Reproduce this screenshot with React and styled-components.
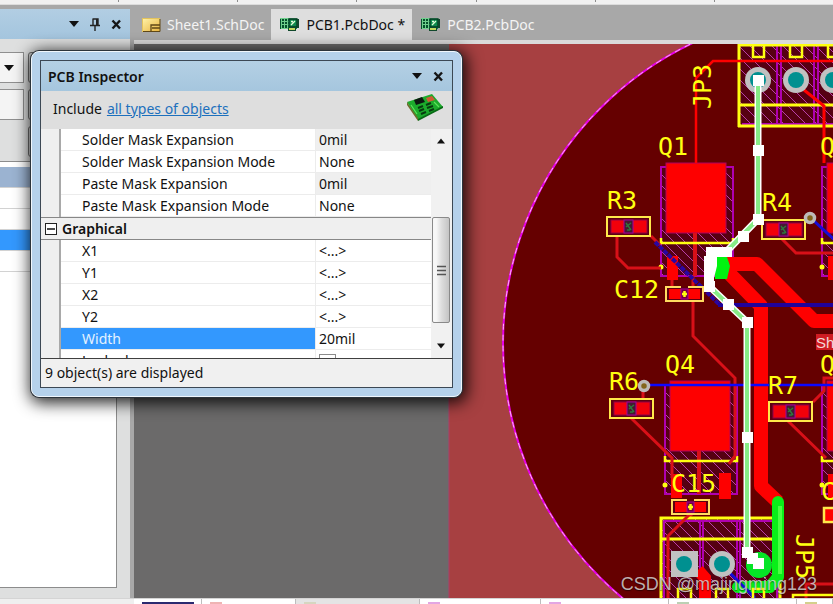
import React from 'react';
import styled, { createGlobalStyle, css } from 'styled-components';

const GlobalStyle = createGlobalStyle`
  * {
    box-sizing: border-box;
  }

  body {
    margin: 0;
    overflow: hidden;
    font-family: "Noto Sans", "Open Sans", sans-serif;
    font-size: 14px;
    color: #111;
  }

  button, input {
    font: inherit;
    color: inherit;
  }
`;

const AppShell = styled.div`
  display: flex;
  flex-direction: column;
  height: 100vh;
  background: #a8a8a8;
`;

const ToolbarEdge = styled.div`
  display: flex;
  justify-content: space-evenly;
  flex: none;
  height: 5px;
  background: #f1f1f1;
  border-bottom: 1px solid #dcdcdc;
`;

const ToolbarTick = styled.span`
  width: 1px;
  height: 2px;
  background: #8c8c8c;
`;

const Body = styled.div`
  display: flex;
  flex: 1;
  min-height: 0;
  gap: 4px;
`;

const SidePanel = styled.aside`
  display: flex;
  flex-direction: column;
  flex: none;
  width: 130px;
  margin-top: 4px;
  background: #dedfdf;
`;

const SideHeader = styled.div`
  display: flex;
  align-items: center;
  justify-content: flex-end;
  gap: 9px;
  height: 30px;
  padding-right: 8px;
  background: linear-gradient(#b2cee3, #a4c5de);
`;

const IconButton = styled.button`
  display: flex;
  align-items: center;
  justify-content: center;
  width: 12px;
  height: 16px;
  padding: 0;
  border: 0;
  background: none;
`;

const SideControls = styled.div`
  display: grid;
  grid-template-columns: 24px 60px;
  grid-auto-rows: 31px;
  gap: 6px 4px;
  padding-top: 13px;
  height: 122px;
  overflow: hidden;
`;

const fieldBox = css`
  border: 1px solid #8f8f8f;
  border-left: 0;
  border-radius: 0;
  background: #f4f4f4;
  padding: 0;
  width: 24px;
`;

const DropButton = styled.button`
  ${fieldBox}
  display: flex;
  align-items: center;
  padding-left: 4px;
`;

const SideInput = styled.input`
  ${fieldBox}
`;

const SideAction = styled.button`
  border: 1px solid #6e6e6e;
  border-radius: 3px;
  background: #d4d4d4;
`;

const SideList = styled.div`
  flex: 1;
  margin: 0 13px 10px 0;
  padding-top: 5px;
  border: solid #8c8c8c;
  border-width: 1px 1px 1px 0;
  background: #fff;
`;

const tones = { header: '#9bb3d1', plain: '#fff', active: '#3398fe' };

const SideRow = styled.div`
  height: 21px;
  border-bottom: 1px solid #d2d2d2;
  background: ${({ $tone }) => tones[$tone]};
`;

const Documents = styled.main`
  display: flex;
  flex-direction: column;
  flex: 1;
  min-width: 0;
`;

const TabBar = styled.div`
  display: flex;
  flex: none;
  height: 39px;
  padding-top: 4px;
  border-bottom: 4px solid #dadada;
`;

const Tab = styled.button`
  display: flex;
  align-items: center;
  gap: 6px;
  height: 31px;
  padding: 0 7px 0 8px;
  border: 0;
  white-space: nowrap;
  background: ${({ $active }) => ($active ? '#dedede' : 'transparent')};
  color: ${({ $active }) => ($active ? '#111' : '#f4f4f4')};
`;

const Canvas = styled.div`
  position: relative;
  display: flex;
  flex: 1;
  min-height: 0;
  overflow: hidden;
  background: #6b6a6a;
`;

const BoardSvg = styled.svg`
  display: block;
  width: 100%;
  height: 100%;
`;

const Silk = styled.text`
  font-family: "DejaVu Sans Mono", monospace;
  font-size: 25px;
  fill: #ffff10;
`;

const NetTip = styled.text`
  font-family: "Liberation Sans", Arial, sans-serif;
  font-size: 15px;
  fill: #f3d6d6;
`;

const Watermark = styled.span`
  position: absolute;
  right: 16px;
  bottom: 2px;
  font-family: "Liberation Sans", Arial, sans-serif;
  font-size: 18px;
  line-height: 24px;
  color: rgba(222, 222, 222, 0.8);
  text-shadow: 0 1px 1px rgba(0, 0, 0, 0.5);
`;

const LayerBar = styled.div`
  display: grid;
  grid-template-columns: 68px 94px 124px 121px 128px 128px 1fr;
  flex: none;
  height: 6px;
  padding-left: 134px;
  background: #efefef;
  border-top: 1px solid #d4d4d4;
`;

const LayerTab = styled.div`
  padding: 3px 4px 0 8px;
  border-right: 1px solid #bdbdbd;
  background: ${({ $shade }) => $shade || '#fff'};

  &::before {
    content: "";
    display: block;
    width: ${({ $wide }) => ($wide ? '52px' : '12px')};
    height: 3px;
    background: ${({ $color }) => $color};
  }
`;

const Inspector = styled.section`
  position: absolute;
  left: 31px;
  top: 51px;
  width: 431px;
  padding: 8px;
  border: 1px solid #f0f6fc;
  border-radius: 8px;
  background: #b5d1eb;
  box-shadow: 0 0 0 1px #2c333b, 2px 3px 16px 3px rgba(0, 0, 0, 0.85);
`;

const InspectorFrame = styled.div`
  border: 1px solid #3c4854;
  background: #f0f0f0;
`;

const TitleBar = styled.header`
  display: flex;
  align-items: center;
  gap: 9px;
  height: 30px;
  padding: 0 8px 0 7px;
  background: linear-gradient(#b4d0e4, #a5c6de);
`;

const Title = styled.h1`
  flex: 1;
  margin: 0;
  font-size: 14px;
  font-weight: 600;
`;

const FilterBar = styled.div`
  display: flex;
  align-items: center;
  gap: 5px;
  height: 38px;
  padding: 0 8px 4px 12px;
  background: #dedede;
`;

const FilterLink = styled.a`
  flex: 1;
  color: #1c70bd;
`;

const Grid = styled.div`
  display: flex;
  align-items: flex-start;
  height: 230px;
  overflow: hidden;
  border-bottom: 1px solid #3f3f3f;
`;

const PropertyTable = styled.table`
  flex: 1;
  table-layout: fixed;
  border-collapse: separate;
  border-spacing: 0;
  line-height: 20px;
`;

const GutterCol = styled.col`
  width: 20px;
`;

const NameCol = styled.col`
  width: 255px;
`;

const Gutter = styled.td`
  padding: 0;
  border-right: 2px solid #a9a9a9;
  background: #efefef;
`;

const NameCell = styled.th`
  height: 22px;
  padding: 0 0 0 21px;
  border: solid #ececec;
  border-width: 0 1px 1px 0;
  background: ${({ $selected }) => ($selected ? '#3398fe' : '#fff')};
  color: ${({ $selected }) => ($selected ? '#e4f2ff' : '#111')};
  font-weight: 400;
  text-align: left;
`;

const ValueCell = styled.td`
  padding: 0 0 0 3px;
  border-bottom: 1px solid #ececec;
  background: ${({ $readOnly }) => ($readOnly ? '#efefef' : '#fff')};
`;

const GroupCell = styled.th`
  height: 23px;
  padding: 0 0 0 4px;
  border: solid #878787;
  border-width: 1px 0;
  background: #efefef;
  font-weight: 600;
  text-align: left;
`;

const GroupLabel = styled.span`
  display: flex;
  align-items: center;
  gap: 5px;
`;

const Toggle = styled.button`
  display: flex;
  align-items: center;
  justify-content: center;
  width: 12px;
  height: 12px;
  padding: 0;
  border: 1px solid #222;
  background: #fff;
`;

const LockBox = styled.input`
  appearance: none;
  display: block;
  width: 17px;
  height: 17px;
  margin: 3px 0 0;
  border: 1px solid #8b8b8b;
  background: #fff;
`;

const ScrollBar = styled.div`
  display: flex;
  flex-direction: column;
  align-self: stretch;
  flex: none;
  width: 21px;
  padding: 0 2px 0 1px;
  background: #f1f1f1;
`;

const ScrollArrow = styled.button`
  display: flex;
  align-items: center;
  justify-content: center;
  height: 24px;
  padding: 0;
  border: 0;
  background: none;
`;

const ScrollTrack = styled.div`
  flex: 1;
  display: flex;
  flex-direction: column;
  justify-content: flex-end;
  padding-bottom: 11px;
`;

const ScrollThumb = styled.div`
  display: flex;
  align-items: center;
  justify-content: center;
  height: 106px;
  border: 1px solid #898989;
  border-radius: 2px;
  background: linear-gradient(90deg, #f7f7f7 20%, #dcdcdc 55%, #c4c4c4);
`;

const StatusLine = styled.footer`
  height: 28px;
  padding: 0 4px;
  line-height: 28px;
`;

const Arrow = ({ up, size = 10 }) => (
  <svg width={size} height={size} viewBox="0 0 10 10" aria-hidden="true">
    <path d={up ? 'M0 8L5 2L10 8Z' : 'M0 2H10L5 8Z'} fill="#111" />
  </svg>
);

const Cross = () => (
  <svg width="11" height="11" viewBox="0 0 11 11" aria-hidden="true">
    <path d="M1.5 1.5L9 9.5M9 1.5L1.5 9.5" stroke="#161616" strokeWidth="2.4" />
  </svg>
);

const Pin = () => (
  <svg width="10" height="13" viewBox="0 0 10 13" aria-hidden="true">
    <path d="M2.5 1H8V7.5M3 1V7.5M0 7.5H10M5 8V13" fill="none" stroke="#222" strokeWidth="1.4" />
    <path d="M6 1H8V7.5H6Z" fill="#222" />
  </svg>
);

const SchIcon = () => (
  <svg width="19" height="14" viewBox="0 0 19 14" aria-hidden="true">
    <defs>
      <linearGradient id="sheet" x1="0" y1="0" x2="1" y2="1">
        <stop offset="0" stopColor="#fff3a8" />
        <stop offset="1" stopColor="#e8b440" />
      </linearGradient>
    </defs>
    <rect x="0.5" y="0.5" width="17" height="13" fill="url(#sheet)" stroke="#e3c35c" />
    <path d="M1 13.5H18V1" fill="none" stroke="#5f4716" />
    <path d="M9 13V7H18M10 10H18" fill="none" stroke="#5f4716" strokeWidth="1.3" />
  </svg>
);

const PcbIcon = () => (
  <svg width="21" height="15" viewBox="0 0 21 15" aria-hidden="true">
    <rect x="1" y="1" width="10" height="11" fill="#07502c" />
    <rect x="9" y="1" width="9" height="11" fill="#0e8a4c" />
    <path d="M1 1.5H18M2 4.5H10M2 7.5H10M2 11.5H10M2.5 1V12M5.5 1V12M8.5 1V12" stroke="#6fcf8c" strokeWidth="1" />
    <path d="M10 2H18V10H10Z" fill="none" stroke="#063a24" strokeWidth="1.3" />
    <path d="M12 8L16 4M12 4.5H14" stroke="#e2ffd9" strokeWidth="1.3" />
    <path d="M9 11H17V14H9ZM18 2H20V11H18Z" fill="#10482c" />
    <path d="M10 11H16V13H10Z" fill="#c4d85c" />
  </svg>
);

const BoardIcon = () => (
  <svg width="38" height="30" viewBox="0 0 38 30" aria-hidden="true">
    <path d="M1 9L26 1L37 14L12 27Z" fill="#1cab2c" />
    <path d="M1 9L12 25V28L1 12Z" fill="#6d6d2d" />
    <path d="M12 26L37 13V15L12 28Z" fill="#086b16" />
    <path d="M8 7L16 4L19 9L10 12Z" fill="#0c1810" />
    <path d="M20 5L26 3L29 7L22 9Z" fill="#cf5b35" />
    <path d="M12 15L17 13M13 18L18 16M15 21L20 19M20 12L25 10M21 15L27 13M23 18L28 16" stroke="#073c10" strokeWidth="2" />
    <path d="M28 9L33 14M5 12L11 21" stroke="#5de35a" strokeWidth="1.2" />
  </svg>
);

/* board items, all in design coordinates */
const RED = '#fe0000';
const TRACE = '#d81018';
const YELLOW = '#ffff10';
const MAGENTA = '#b000b0';

const SILK_LABELS = [
  { text: 'Q1', x: 658, y: 155 },
  { text: 'Q', x: 820, y: 155 },
  { text: 'R3', x: 607, y: 209 },
  { text: 'R4', x: 762, y: 211 },
  { text: 'C12', x: 614, y: 298 },
  { text: 'Q4', x: 665, y: 373 },
  { text: 'Q', x: 820, y: 373 },
  { text: 'R6', x: 609, y: 390 },
  { text: 'R7', x: 768, y: 394 },
  { text: 'C15', x: 671, y: 492 },
  { text: 'C', x: 821, y: 500 },
];

const RESISTORS = [
  { x: 607, y: 217 },
  { x: 762, y: 220 },
  { x: 610, y: 399 },
  { x: 769, y: 402 },
];

const HANDLES = [
  [758, 80],
  [758, 150],
  [758, 219],
  [743, 236],
  [709, 286],
  [728, 304],
  [747, 322],
  [747, 437],
  [747, 552],
];

const Resistor = ({ x, y }) => (
  <g transform={`translate(${x} ${y})`}>
    <rect width="43" height="19" fill="#5c0010" stroke="#ffe94a" strokeWidth="2" />
    <rect x="4" y="3" width="36" height="13" fill="#f2000a" stroke="#930048" />
    <rect x="17" y="3" width="9" height="13" fill="#461830" stroke="#a000a0" />
    <path d="M19 6L24 13M24 6L19 10M20 13H23" stroke="#2d7a3c" strokeWidth="1.4" />
  </g>
);

const Capacitor = ({ x, y }) => (
  <g transform={`translate(${x} ${y})`}>
    <path d="M15 0H0V14H37V0H22" fill="#5c0010" stroke="#ffdc60" strokeWidth="2" />
    <rect x="3" y="2" width="12" height="10" fill={RED} />
    <rect x="22" y="2" width="12" height="10" fill={RED} />
    <rect x="15" y="2" width="7" height="10" fill="#77003c" stroke="#a000a0" />
    <path d="M16 7H21M18.5 4V10" stroke={YELLOW} strokeWidth="2.5" />
  </g>
);

const Transistor = ({ x, y }) => (
  <g transform={`translate(${x} ${y})`}>
    <rect x="0" y="4" width="72" height="109" fill="url(#hatch)" stroke={MAGENTA} strokeWidth="2" />
    <rect x="5" y="0" width="60" height="70" fill={RED} stroke="#b00060" />
    <path d="M34 70V113" stroke={TRACE} strokeWidth="4" />
    <rect x="6" y="93" width="11" height="24" fill={RED} />
    <path d="M0 75V80H72V75" fill="none" stroke={YELLOW} strokeWidth="2.5" />
    <circle cx="0" cy="104" r="2.5" fill={YELLOW} />
  </g>
);

const Pad = ({ x, y }) => (
  <g>
    <circle cx={x} cy={y} r="13" fill="#c1c1c1" />
    <circle cx={x} cy={y} r="8" fill="#009090" />
  </g>
);

const Via = ({ x, y }) => (
  <circle cx={x} cy={y} r="4.5" fill="#83661c" stroke="#bdbab8" strokeWidth="3.5" />
);

const Board = () => (
  <BoardSvg viewBox="134 44 699 554" preserveAspectRatio="xMinYMin slice" role="img" aria-label="PCB layout">
    <defs>
      <pattern id="hatch" width="11" height="11" patternUnits="userSpaceOnUse">
        <rect width="11" height="11" fill="#560012" />
        <path d="M-1 -1L12 12" stroke="#b840a8" strokeWidth="1" />
      </pattern>
    </defs>
    <rect x="449" y="44" width="1200" height="1200" fill="#a74041" />
    <path d="M449 390V1200" stroke="#b03a68" strokeWidth="1" />
    <circle cx="835" cy="343" r="332" fill="#650000" stroke="#e800e8" strokeWidth="2" />
    <circle cx="835" cy="343" r="332" fill="none" stroke="#ffb8f4" strokeWidth="1" strokeDasharray="6 5" />

    {/* top connector */}
    <rect x="740" y="45" width="120" height="81" fill="url(#hatch)" />
    <path d="M742 124H833M777 45V124M781 45V124M814 45V124M818 45V124" stroke={MAGENTA} strokeWidth="2" />
    <path d="M739 127V45H840M738 105H840M738 126H840" fill="none" stroke={YELLOW} strokeWidth="3" />
    <path d="M753 44V57H764V44M790 44V57H802V44M828 44V57H840" fill="none" stroke={YELLOW} strokeWidth="2.5" />

    <Transistor x={661} y={163} />
    <Transistor x={665} y={381} />
    <Transistor x={822} y={163} />
    <Transistor x={822} y={381} />
    <rect x="719" y="473" width="12" height="26" fill={RED} />

    {/* thin traces */}
    <g fill="none" stroke={TRACE} strokeWidth="3">
      <path d="M840 61H713L696 78V163" stroke={RED} strokeWidth="2.5" />
      <path d="M804 90L824 106V163" stroke={RED} />
      <path d="M617 232V257L628 268H661M651 236L660 245" />
      <path d="M693 276V336L735 378V456L729 464" />
      <path d="M672 280V288M782 239L796 253H833" />
      <path d="M643 391V398M630 417L672 458V478M788 421L826 458M813 402L824 391V378H840" />
      <path d="M692 514L667 539V598" />
      <path d="M806 598V584H840" />
    </g>

    {/* bottom connector */}
    <rect x="661" y="519" width="119" height="90" fill="url(#hatch)" />
    <path d="M664 521H778M664 521V604M700 521V604M703 521V604M737 521V604M740 521V604M777 521V604" fill="none" stroke={MAGENTA} strokeWidth="2" />
    <path d="M661 604V518H780V604M661 539H780" fill="none" stroke={YELLOW} strokeWidth="3" />
    <path d="M692 512L668 536V604M692 566L705 580V604" fill="none" stroke={TRACE} strokeWidth="3" />
    <path d="M698 570L705 578V604" fill="none" stroke={RED} strokeWidth="12" />

    {/* wide copper */}
    <g fill="none" strokeLinejoin="round">
      <path d="M722 264H757L814 321H845" stroke={RED} strokeWidth="14" />
      <path d="M724 268L761 306V486L778 502" stroke={RED} strokeWidth="14" />
      <path d="M778 502V577L770 587H738" stroke="#09ef18" strokeWidth="12" strokeLinecap="round" />
      <path d="M780 506V574" stroke="#48ff40" strokeWidth="4" />
    </g>

    {/* unrouted nets */}
    <path d="M655 242L720 305" stroke="#2a06a0" strokeWidth="4" strokeDasharray="5 1" />
    <path d="M718 305H840" stroke="#20029a" strokeWidth="4" />
    <path d="M648 385H840" stroke="#0c08ff" strokeWidth="2.5" />
    <path d="M814 221L840 245M730 573L755 598" stroke="#160cd8" strokeWidth="3" />

    {RESISTORS.map((part) => (
      <Resistor key={`${part.x}-${part.y}`} {...part} />
    ))}
    <Capacitor x={666} y={287} />
    <Capacitor x={672} y={500} />
    <rect x="824" y="508" width="20" height="14" fill={RED} stroke="#ffe94a" strokeWidth="2.5" />
    <Via x={810} y={218} />
    <Via x={644} y={386} />

    <Pad x={758} y={80} />
    <Pad x={796} y={80} />
    <Pad x={833} y={80} />
    <rect x="671" y="551" width="27" height="26" fill="#c1c1c1" />
    <circle cx="684" cy="564" r="8" fill="#009090" />
    <Pad x={722} y={564} />
    <circle cx="759" cy="565" r="13" fill="#05e426" />
    <path d="M678 604V589H691V604M716 604V589H728V604M753 604V589H764V604M793 604V595H840" fill="none" stroke={YELLOW} strokeWidth="2.5" />

    {SILK_LABELS.map(({ text, x, y }) => (
      <Silk key={`${text}-${x}-${y}`} x={x} y={y}>{text}</Silk>
    ))}
    <Silk transform="translate(711 109) rotate(-90)">JP3</Silk>
    <Silk transform="translate(796 534) rotate(90)">JP5</Silk>

    {/* selected track with its drag handles */}
    <path d="M715 257H727L730 266L727 279H715Z" fill="#00f410" />
    <g fill="none">
      <path d="M758 80V219L728 250M709 286L747 322V552" stroke="#fff" strokeWidth="7" />
      <path d="M758 80V219L728 250M709 286L747 322V552" stroke="#86ec86" strokeWidth="4" />
    </g>
    <path d="M706 247H732V257H717V266L714 278V291H704V256H706Z" fill="#fff" />
    <path d="M742 547H752V553H758V558H764V569H753V564H747V558H742Z" fill="#fff" />
    {HANDLES.map(([x, y]) => (
      <rect key={`${x}-${y}`} x={x - 5} y={y - 5} width="11" height="11" fill="#fff" />
    ))}

    <rect x="816" y="334" width="30" height="16" fill="#cf1c22" />
    <NetTip x="816" y="348">Sh</NetTip>
  </BoardSvg>
);

const MASK_PROPERTIES = [
  { name: 'Solder Mask Expansion', value: '0mil', readOnly: true },
  { name: 'Solder Mask Expansion Mode', value: 'None' },
  { name: 'Paste Mask Expansion', value: '0mil', readOnly: true },
  { name: 'Paste Mask Expansion Mode', value: 'None' },
];

const GRAPHICAL_PROPERTIES = [
  { name: 'X1', value: '<...>' },
  { name: 'Y1', value: '<...>' },
  { name: 'X2', value: '<...>' },
  { name: 'Y2', value: '<...>' },
  { name: 'Width', value: '20mil', selected: true },
];

const PropertyRow = ({ name, value, readOnly, selected }) => (
  <tr>
    <Gutter />
    <NameCell scope="row" $selected={selected}>{name}</NameCell>
    <ValueCell $readOnly={readOnly}>{value}</ValueCell>
  </tr>
);

const PcbInspector = () => (
  <Inspector aria-label="PCB Inspector">
    <InspectorFrame>
      <TitleBar>
        <Title>PCB Inspector</Title>
        <IconButton aria-label="Panel menu"><Arrow /></IconButton>
        <IconButton aria-label="Close inspector"><Cross /></IconButton>
      </TitleBar>
      <FilterBar>
        <span>Include</span>
        <FilterLink href="#types">all types of objects</FilterLink>
        <BoardIcon />
      </FilterBar>
      <Grid>
        <PropertyTable>
          <colgroup>
            <GutterCol />
            <NameCol />
            <col />
          </colgroup>
          <tbody>
            {MASK_PROPERTIES.map((item) => (
              <PropertyRow key={item.name} {...item} />
            ))}
            <tr>
              <GroupCell colSpan={3} scope="rowgroup">
                <GroupLabel>
                  <Toggle aria-label="Collapse Graphical">
                    <svg width="8" height="8" viewBox="0 0 8 8" aria-hidden="true">
                      <path d="M0 4H8" stroke="#111" strokeWidth="1.5" />
                    </svg>
                  </Toggle>
                  Graphical
                </GroupLabel>
              </GroupCell>
            </tr>
            {GRAPHICAL_PROPERTIES.map((item) => (
              <PropertyRow key={item.name} {...item} />
            ))}
            <tr>
              <Gutter />
              <NameCell scope="row"><label htmlFor="locked">Locked</label></NameCell>
              <ValueCell><LockBox type="checkbox" id="locked" /></ValueCell>
            </tr>
          </tbody>
        </PropertyTable>
        <ScrollBar>
          <ScrollArrow aria-label="Scroll up"><Arrow up size={8} /></ScrollArrow>
          <ScrollTrack>
            <ScrollThumb>
              <svg width="9" height="11" viewBox="0 0 9 11" aria-hidden="true">
                <path d="M0 1.5H9M0 5.5H9M0 9.5H9" stroke="#555" strokeWidth="1.5" />
              </svg>
            </ScrollThumb>
          </ScrollTrack>
          <ScrollArrow aria-label="Scroll down"><Arrow size={8} /></ScrollArrow>
        </ScrollBar>
      </Grid>
      <StatusLine>9 object(s) are displayed</StatusLine>
    </InspectorFrame>
  </Inspector>
);

const App = () => (
  <AppShell>
    <GlobalStyle />
    <ToolbarEdge>
      {[1, 2, 3, 4, 5, 6].map((n) => <ToolbarTick key={n} />)}
    </ToolbarEdge>
    <Body>
      <SidePanel>
        <SideHeader>
          <IconButton aria-label="Menu"><Arrow /></IconButton>
          <IconButton aria-label="Pin panel"><Pin /></IconButton>
          <IconButton aria-label="Close panel"><Cross /></IconButton>
        </SideHeader>
        <SideControls>
          <DropButton aria-label="Mode"><Arrow /></DropButton>
          <SideAction aria-label="Apply" />
          <SideInput aria-label="Filter" />
          <SideAction aria-label="Clear" />
          <span />
          <SideAction aria-label="Zoom level" />
        </SideControls>
        <SideList>
          <SideRow $tone="header" />
          <SideRow $tone="plain" />
          <SideRow $tone="plain" />
          <SideRow $tone="active" />
          <SideRow $tone="plain" />
        </SideList>
      </SidePanel>
      <Documents>
        <TabBar>
          <Tab><SchIcon />Sheet1.SchDoc</Tab>
          <Tab $active><PcbIcon />PCB1.PcbDoc *</Tab>
          <Tab><PcbIcon />PCB2.PcbDoc</Tab>
        </TabBar>
        <Canvas>
          <Board />
          <Watermark>CSDN @majingming123</Watermark>
        </Canvas>
      </Documents>
    </Body>
    <LayerBar>
      <LayerTab $color="#2b2a70" $wide />
      <LayerTab $color="#efb4b4" />
      <LayerTab $color="#d6d6c0" $shade="#e4e4e4" />
      <LayerTab $color="#e3a6e3" />
      <LayerTab $color="#e3a6e3" />
      <LayerTab $color="#bcd0b4" />
      <LayerTab $color="#d4d08c" />
    </LayerBar>
    <PcbInspector />
  </AppShell>
);

export default App;
